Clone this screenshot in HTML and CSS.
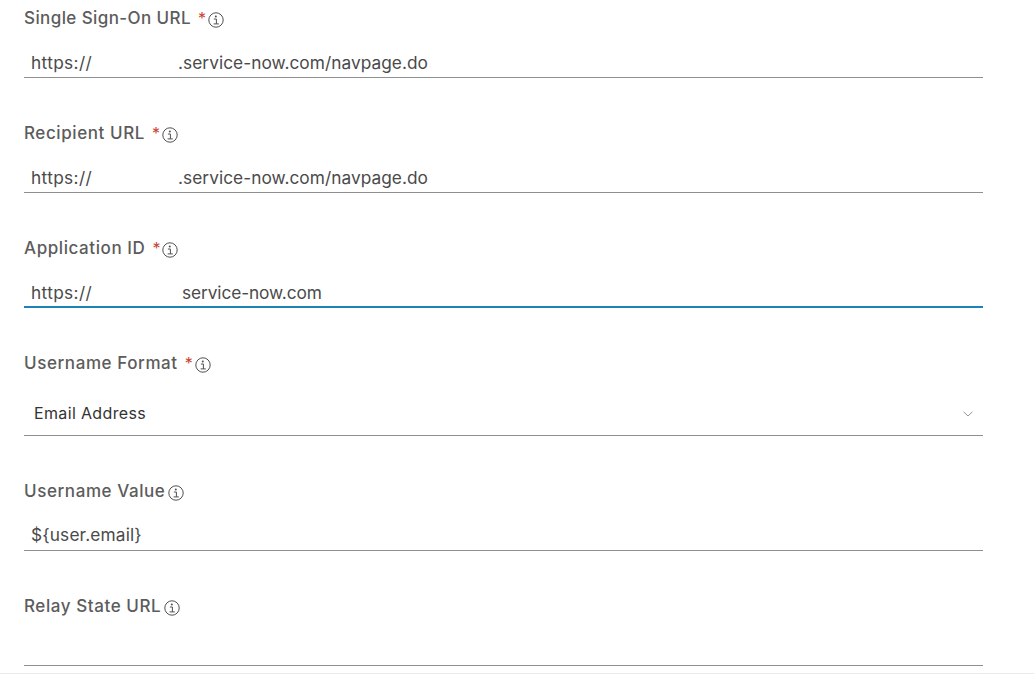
FILE: index.html
```html
<!DOCTYPE html>
<html lang="en">
<head>
<meta charset="utf-8">
<title>SAML settings</title>
<link rel="stylesheet" href="styles.css">
</head>
<body>
<svg class="sprite" width="0" height="0" aria-hidden="true">
  <symbol id="info" viewBox="0 0 16 16">
    <circle cx="8" cy="8" r="7.2" fill="none" stroke="currentColor" stroke-width="1"/>
    <circle cx="7.8" cy="4.4" r="1" fill="currentColor"/>
    <path d="M5.9 7h2.5v4.8M5.6 11.9h5.2" fill="none" stroke="currentColor" stroke-width="1"/>
  </symbol>
</svg>
<main class="form">
  <section class="field">
    <div class="label-row"><span class="label tight">Single Sign-On URL</span><span class="req">*</span><svg class="info"><use href="#info"/></svg></div>
    <div class="control"><span class="scheme">https://</span><span class="redact r1"></span><span class="host">.service-now.com/navpage.do</span></div>
  </section>
  <section class="field">
    <div class="label-row"><span class="label">Recipient URL</span><span class="req">*</span><svg class="info"><use href="#info"/></svg></div>
    <div class="control"><span class="scheme">https://</span><span class="redact r1"></span><span class="host">.service-now.com/navpage.do</span></div>
  </section>
  <section class="field">
    <div class="label-row"><span class="label">Application ID</span><span class="req">*</span><svg class="info"><use href="#info"/></svg></div>
    <div class="control focused"><span class="scheme">https://</span><span class="redact r2"></span><span class="short">service-now.com</span></div>
  </section>
  <section class="field">
    <div class="label-row"><span class="label">Username Format</span><span class="req">*</span><svg class="info"><use href="#info"/></svg></div>
    <div class="control select"><span>Email Address</span>
      <svg class="chevron" viewBox="0 0 10 6"><path d="M0.6 0.8 5 5 9.4 0.8" fill="none" stroke="currentColor" stroke-width="0.9"/></svg>
    </div>
  </section>
  <section class="field">
    <div class="label-row"><span class="label">Username Value</span><svg class="info plain"><use href="#info"/></svg></div>
    <div class="control raised"><span class="value">${user.email}</span></div>
  </section>
  <section class="field">
    <div class="label-row"><span class="label">Relay State URL</span><svg class="info plain"><use href="#info"/></svg></div>
    <div class="control"></div>
  </section>
</main>
<div class="footer-line"></div>
</body>
</html>
```
FILE: styles.css
```css
* { box-sizing: border-box; }
html, body { margin: 0; height: 100%; background: #fff; overflow: hidden; }
body { font-family: Inter, "Open Sans", sans-serif; color: #454545; }
.sprite { position: absolute; }
.form { width: 983px; padding-left: 24px; }
.field { margin-bottom: 37px; }
.label-row { height: 36px; display: flex; align-items: center; color: #5c5c5c; }
.label { font-size: 17px; font-weight: 500; line-height: 20px; letter-spacing: 0.58px; }
.label.tight { letter-spacing: 0.4px; }
.req { color: #c9442f; font-size: 16px; margin-left: 7px; line-height: 20px; }
.info { width: 16px; height: 16px; margin-left: 2px; margin-top: 3px; color: #505050; }
.info.plain { margin-left: 3px; }
.control {
  height: 42px; padding: 12px 0 0 7px; line-height: 30px; font-size: 17.3px;
  border-bottom: 1px solid #8f8f8f; display: flex; white-space: pre; color: #4a4a4a;
}
.control.raised { padding-top: 11px; }
.control.focused { border-bottom: 2px solid #1e82b8; }
.control.select {
  height: 55px; padding: 17px 10px 0 10px; font-size: 16px; letter-spacing: 0.35px; justify-content: space-between;
  color: #333;
}
.scheme { letter-spacing: 0.35px; }
.host { letter-spacing: 0.04px; }
.short { letter-spacing: -0.1px; }
.value { letter-spacing: 0.15px; }
.redact { display: inline-block; }
.r1 { width: 86px; }
.r2 { width: 90px; }
.chevron { width: 10px; height: 6px; margin-top: 13px; color: #8a8a8a; }
.footer-line { height: 1px; background: #eaeaea; margin-top: -30px; }
```
